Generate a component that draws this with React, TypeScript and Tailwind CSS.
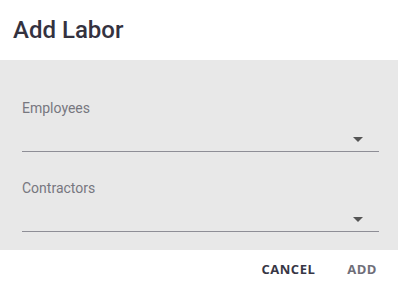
import React from 'react';

const Caret: React.FC = () => (
  <svg width="10" height="5" viewBox="0 0 10 5" className="fill-[#555]">
    <path d="M0 0h10L5 5z" />
  </svg>
);

const SelectField: React.FC<{ label: string }> = ({ label }) => (
  <div className="flex flex-col">
    <span className="text-[14px] leading-[16px] text-[#77777f]">{label}</span>
    <div className="mt-[13px] flex h-[23px] items-start justify-end border-b border-[#8e8e96] pr-[16px] pt-[8px]">
      <Caret />
    </div>
  </div>
);

export default function App() {
  return (
    <div className="h-[284px] w-[398px] bg-white font-['Roboto',sans-serif]">
      <div className="px-[13px] pt-[15px] pb-[14px]">
        <h1 className="text-[24px] font-medium leading-[31px] text-[#34323f]">Add Labor</h1>
      </div>
      <div className="flex flex-col gap-[28px] bg-[#e8e8e8] px-[22px] pt-[40px] pb-[18px] pr-[19px]">
        <SelectField label="Employees" />
        <SelectField label="Contractors" />
      </div>
      <div className="flex justify-end gap-[32px] pr-[21px] pt-[10px]">
        <button className="font-['Open_Sans',sans-serif] text-[13px] font-bold tracking-[0.5px] text-[#373645]">CANCEL</button>
        <button className="font-['Open_Sans',sans-serif] text-[13px] font-bold tracking-[0.5px] text-[#6f6e78]">ADD</button>
      </div>
    </div>
  );
}
